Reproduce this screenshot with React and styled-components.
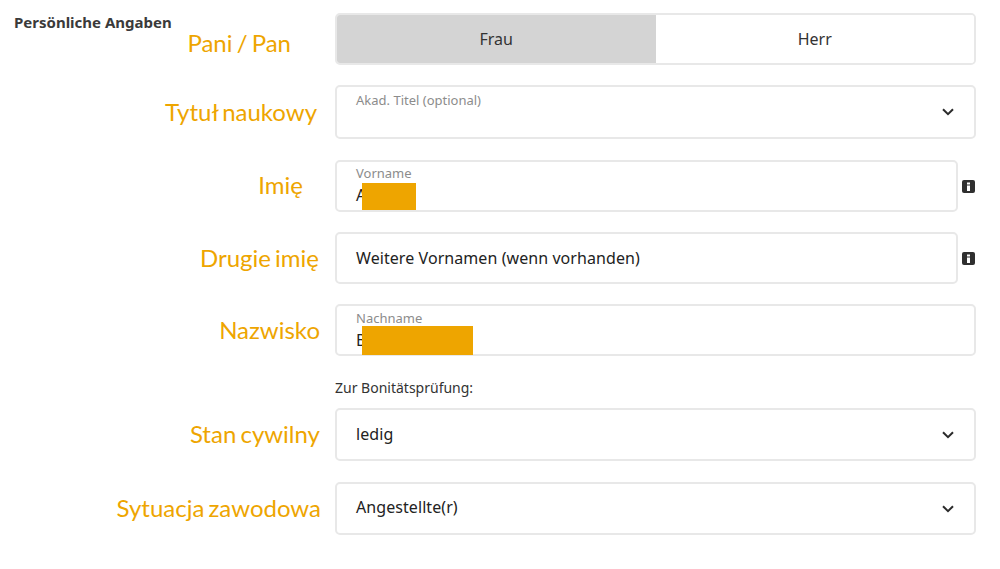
import React from 'react';
import styled, { createGlobalStyle } from 'styled-components';

const GlobalStyle = createGlobalStyle`
  html, body {
    margin: 0;
    padding: 0;
    background: #fff;
  }
  body {
    font-family: "Noto Sans", "Open Sans", sans-serif;
    color: #2b2b2b;
  }
`;

const Page = styled.div`
  width: 1000px;
  height: 569px;
  box-sizing: border-box;
  padding: 13px 24px 0 14px;
  display: flex;
  flex-direction: column;
  gap: 20px;
  overflow: hidden;
`;

const Row = styled.div`
  display: grid;
  grid-template-columns: 321px 1fr;
  margin-bottom: ${(p) => p.$after || 0}px;
`;

const LeftCell = styled.div`
  display: flex;
  flex-direction: column;
  justify-content: ${(p) => (p.$top ? 'flex-start' : 'flex-end')};
  padding-right: 14px;
`;

const Heading = styled.h2`
  margin: -1px 0 -1px;
  font-size: 15px;
  line-height: 20px;
  font-weight: 700;
  color: #3a3a3a;
  white-space: nowrap;
`;

const Label = styled.div`
  height: ${(p) => p.$height || 52}px;
  line-height: ${(p) => (p.$height || 52) - 2 * (p.$lift || 0)}px;
  padding-right: ${(p) => p.$right || 0}px;
  font-family: Lato, "Noto Sans", sans-serif;
  font-size: 24px;
  word-spacing: -2px;
  color: #eea500;
  text-align: right;
  white-space: nowrap;
`;

const RightCell = styled.div`
  display: flex;
  flex-direction: column;
`;

const Note = styled.div`
  padding-top: 1px;
  margin-bottom: 10px;
  font-size: 14px;
  line-height: 21px;
  color: #333;
`;

const FieldLine = styled.div`
  display: flex;
  align-items: center;
  gap: 4px;
`;

const Box = styled.div`
  position: relative;
  flex: 1 0 auto;
  height: ${(p) => p.$height || 52}px;
  box-sizing: border-box;
  padding: ${(p) => p.$top || 0}px 19px ${(p) => p.$bottom || 0}px;
  display: flex;
  flex-direction: column;
  justify-content: ${(p) => (p.$top ? 'flex-start' : 'center')};
  border: 2px solid #e8e8e8;
  border-radius: 5px;
  background: #fff;
`;

const Floating = styled.span`
  margin-bottom: 3px;
  font-size: 13px;
  line-height: 16px;
  color: #8c8c8c;
`;

const Value = styled.span`
  font-size: 16px;
  line-height: 22px;
  letter-spacing: 0.07px;
  color: #222;
`;

const Redaction = styled.span`
  position: absolute;
  left: 25px;
  top: ${(p) => p.$top}px;
  height: ${(p) => p.$height}px;
  width: ${(p) => p.$width}px;
  background: #eea500;
`;

const Chevron = styled.svg`
  position: absolute;
  right: 20px;
  top: 50%;
  width: 12px;
  height: 8px;
  margin-top: -4px;
`;

const InfoIcon = styled.svg`
  width: 13px;
  height: 13px;
  flex: none;
  margin-right: 1px;
`;

const Toggle = styled.div`
  display: flex;
  height: 52px;
  box-sizing: border-box;
  border: 2px solid #e8e8e8;
  border-radius: 5px;
  overflow: hidden;
`;

const ToggleOption = styled.div`
  flex: 1;
  display: flex;
  align-items: center;
  justify-content: center;
  font-size: 16px;
  color: #333;
  background: ${(p) => (p.$active ? '#d4d4d4' : '#fff')};
`;

const ChevronDown = () => (
  <Chevron viewBox="0 0 12 8">
    <path d="M1 1.2 L6 6.2 L11 1.2" fill="none" stroke="#2b2b2b" strokeWidth="2" />
  </Chevron>
);

const Info = () => (
  <InfoIcon viewBox="0 0 13 13">
    <rect width="13" height="13" rx="2" fill="#2f2f2f" />
    <rect x="5" y="2.5" width="3" height="2" fill="#fff" />
    <rect x="5" y="5.5" width="3" height="5.5" fill="#fff" />
  </InfoIcon>
);

const App = () => {
  return (
    <Page>
      <GlobalStyle />
      <Row>
        <LeftCell $top>
          <Heading>Persönliche Angaben</Heading>
          <Label $height={24} $right={30}>Pani / Pan</Label>
        </LeftCell>
        <RightCell>
          <Toggle>
            <ToggleOption $active>Frau</ToggleOption>
            <ToggleOption>Herr</ToggleOption>
          </Toggle>
        </RightCell>
      </Row>

      <Row $after={1}>
        <LeftCell>
          <Label $height={54} $right={4}>Tytuł naukowy</Label>
        </LeftCell>
        <RightCell>
          <Box $height={54} $top={5}>
            <Floating>Akad. Titel (optional)</Floating>
            <ChevronDown />
          </Box>
        </RightCell>
      </Row>

      <Row>
        <LeftCell>
          <Label $right={18} $lift={1}>Imię</Label>
        </LeftCell>
        <RightCell>
          <FieldLine>
            <Box $top={3}>
              <Floating>Vorname</Floating>
              <Value>A</Value>
              <Redaction $top={21} $height={27} $width={54} />
            </Box>
            <Info />
          </FieldLine>
        </RightCell>
      </Row>

      <Row>
        <LeftCell>
          <Label $right={2}>Drugie imię</Label>
        </LeftCell>
        <RightCell>
          <FieldLine>
            <Box>
              <Value>Weitere Vornamen (wenn vorhanden)</Value>
            </Box>
            <Info />
          </FieldLine>
        </RightCell>
      </Row>

      <Row>
        <LeftCell>
          <Label $right={1}>Nazwisko</Label>
        </LeftCell>
        <RightCell>
          <Box $top={4}>
            <Floating>Nachname</Floating>
            <Value>B</Value>
            <Redaction $top={20} $height={29} $width={111} />
          </Box>
        </RightCell>
      </Row>

      <Row $after={1}>
        <LeftCell>
          <Label $height={53} $right={1} $lift={1}>Stan cywilny</Label>
        </LeftCell>
        <RightCell>
          <Note>Zur Bonitätsprüfung:</Note>
          <Box $height={53} $bottom={2}>
            <Value>ledig</Value>
            <ChevronDown />
          </Box>
        </RightCell>
      </Row>

      <Row>
        <LeftCell>
          <Label $height={53} $lift={1}>Sytuacja zawodowa</Label>
        </LeftCell>
        <RightCell>
          <Box $height={53} $bottom={3}>
            <Value>Angestellte(r)</Value>
            <ChevronDown />
          </Box>
        </RightCell>
      </Row>
    </Page>
  );
};

export default App;
